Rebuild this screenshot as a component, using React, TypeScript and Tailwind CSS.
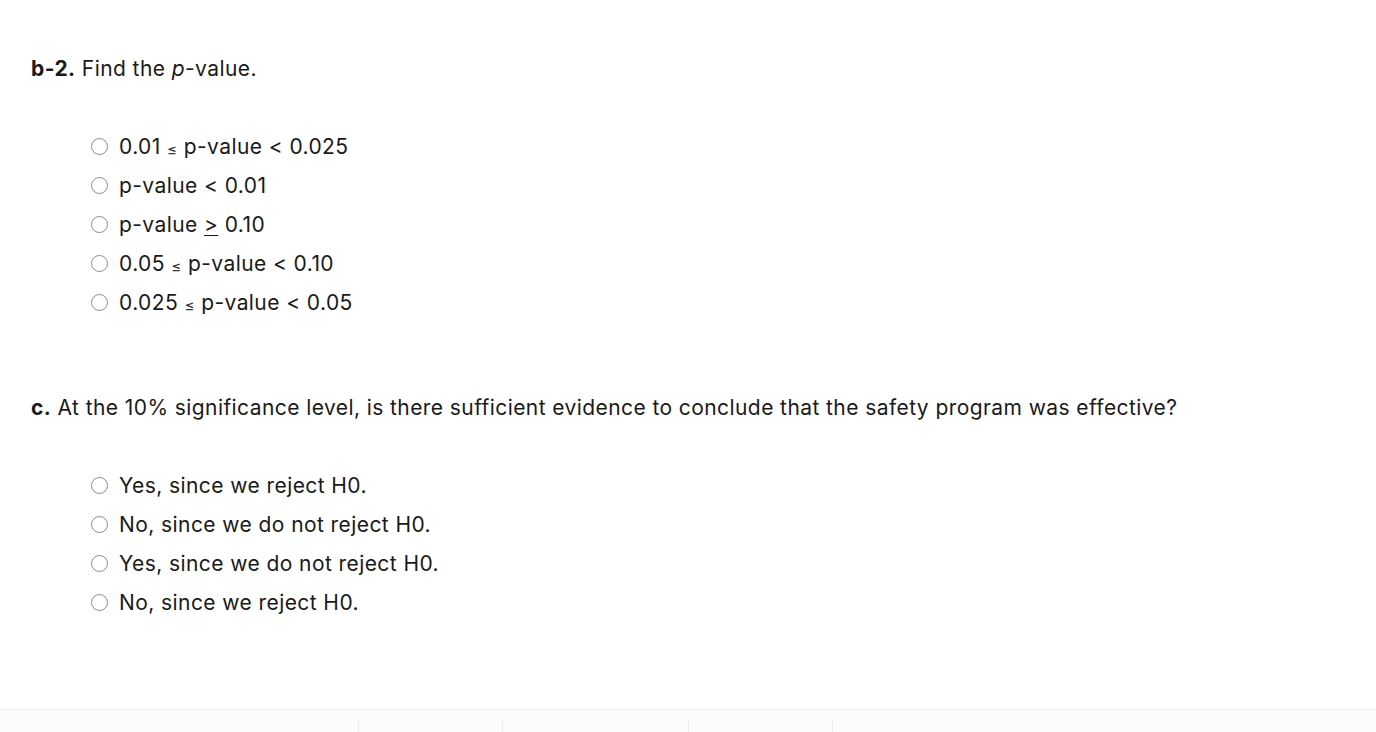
const font = { fontFamily: '"Inter", "Open Sans", sans-serif' };

type Opt = { id: string; label: React.ReactNode };

const pOptions: Opt[] = [
  { id: 'p1', label: <>0.01 <Le /> p-value &lt; 0.025</> },
  { id: 'p2', label: <>p-value &lt; 0.01</> },
  { id: 'p3', label: <>p-value <Ge /> 0.10</> },
  { id: 'p4', label: <>0.05 <Le /> p-value &lt; 0.10</> },
  { id: 'p5', label: <>0.025 <Le /> p-value &lt; 0.05</> },
];

const cOptions: Opt[] = [
  { id: 'c1', label: 'Yes, since we reject H0.' },
  { id: 'c2', label: 'No, since we do not reject H0.' },
  { id: 'c3', label: 'Yes, since we do not reject H0.' },
  { id: 'c4', label: 'No, since we reject H0.' },
];

function Le() {
  return <span className="text-[15px] align-[-1px] text-[#333]">≤</span>;
}

function Ge() {
  return <span className="underline underline-offset-[3px] decoration-1">&gt;</span>;
}

function OptionList({ name, options }: { name: string; options: Opt[] }) {
  return (
    <ul className="pl-[60px]">
      {options.map((o) => (
        <li key={o.id} className="flex items-center h-[39px]">
          <label className="flex items-center gap-[11px] cursor-pointer">
            <input type="radio" name={name} className="sr-only peer" />
            <span className="w-[17px] h-[17px] rounded-full border border-[#8a8a8a] bg-white shrink-0" />
            <span>{o.label}</span>
          </label>
        </li>
      ))}
    </ul>
  );
}

export default function App() {
  return (
    <div className="bg-white min-h-screen text-[#1a1a1a] text-[21px] tracking-[0.42px] flex flex-col" style={font}>
      <div className="px-[31px] pt-[55px] h-[709px]">
        <h2 className="leading-[28px]">
          <span className="font-bold">b-2.</span> Find the <i>p</i>-value.
        </h2>
        <div className="mt-[44px]">
          <OptionList name="pvalue" options={pOptions} />
        </div>
        <h2 className="leading-[28px] mt-[72px]">
          <span className="font-bold">c.</span> At the 10% significance level, is there sufficient evidence to conclude that the safety program was effective?
        </h2>
        <div className="mt-[44px]">
          <OptionList name="conclusion" options={cOptions} />
        </div>
      </div>
      <div className="border-t border-[#eeeeee] bg-[#fcfcfc] flex-1 flex pt-[9px]">
        <div className="w-[358px]" />
        <div className="w-[144px] border-l border-[#ececec]" />
        <div className="w-[186px] border-l border-[#ececec]" />
        <div className="w-[144px] border-l border-[#ececec]" />
        <div className="flex-1 border-l border-[#ececec]" />
      </div>
    </div>
  );
}
